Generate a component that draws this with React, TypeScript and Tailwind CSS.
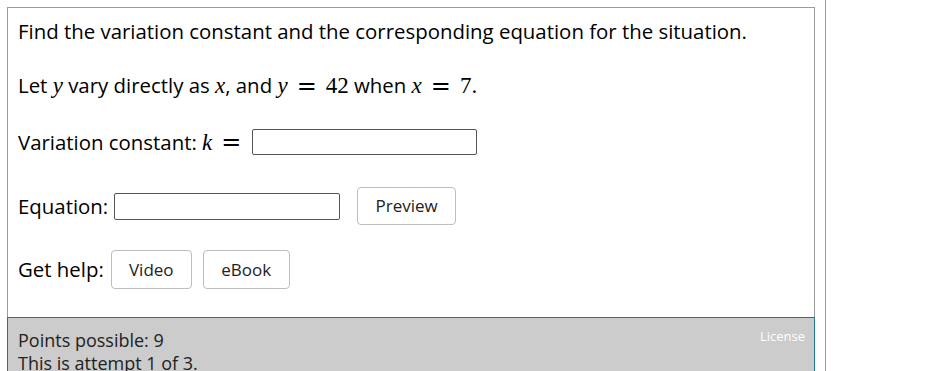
import React from 'react';

// Переменные и числа в формулах набираем засечным шрифтом
function M({ children, italic = true }: { children: React.ReactNode; italic?: boolean }) {
  return (
    <span
      className={`font-['Liberation_Serif',serif] text-[23px] leading-none ${italic ? 'italic' : ''}`}
    >
      {children}
    </span>
  );
}

function Eq() {
  return (
    <span className="font-['DejaVu_Serif',serif] text-[24px] leading-none mx-[9px]">=</span>
  );
}

function Btn({ children, className = '' }: { children: React.ReactNode; className?: string }) {
  return (
    <button
      className={`border border-[#bdbdbd] rounded-[4px] bg-white text-[17px] text-[#222] ${className}`}
    >
      {children}
    </button>
  );
}

export default function App() {
  return (
    <div className="flex h-screen bg-white font-['Open_Sans',sans-serif] text-black">
      <div className="ml-[7px] mt-[7px] w-[808px] shrink-0">
        {/* Условие задачи */}
        <div className="border border-[#9a9a9a] border-b-0 px-[10px] pt-[10px] pb-[28px]">
          <div className="h-[27px] flex items-center text-[20.4px]">
            Find the variation constant and the corresponding equation for the situation.
          </div>
          <div className="h-[27px] mt-[27px] flex items-center text-[20.4px] whitespace-pre">
            Let <M>y</M> vary directly as <M>x</M>, and <M>y</M>
            <Eq />
            <M italic={false}>42</M> when <M>x</M>
            <Eq />
            <M italic={false}>7.</M>
          </div>
          <div className="h-[28px] mt-[29px] flex items-center text-[20.4px]">
            <span className="whitespace-pre">Variation constant: </span>
            <M>k</M>
            <Eq />
            <input className="ml-[2px] w-[225px] h-[26px] border border-[#555] rounded-[2px]" />
          </div>
          <div className="h-[38px] mt-[31px] flex items-center text-[20.4px]">
            <span>Equation:</span>
            <input className="ml-[6px] w-[226px] h-[27px] border border-[#555] rounded-[2px]" />
            <Btn className="ml-[17px] w-[99px] h-[38px]">Preview</Btn>
          </div>
          <div className="h-[39px] mt-[25px] flex items-center text-[20.4px]">
            <span>Get help:</span>
            <Btn className="ml-[7px] w-[81px] h-[39px]">Video</Btn>
            <Btn className="ml-[11px] w-[87px] h-[39px]">eBook</Btn>
          </div>
        </div>
        {/* Нижняя панель с баллами */}
        <div className="relative bg-[#cccccc] border border-[#1a7a96] px-[10px] pt-[11px] text-[18px] text-[#222] leading-[23px]">
          <div>Points possible: 9</div>
          <div>This is attempt 1 of 3.</div>
          <span className="absolute right-[9px] top-[9px] text-[13px] text-white leading-[18px]">
            License
          </span>
        </div>
      </div>
      <div className="ml-[10px] w-px h-full bg-[#9a9a9a]" />
    </div>
  );
}
